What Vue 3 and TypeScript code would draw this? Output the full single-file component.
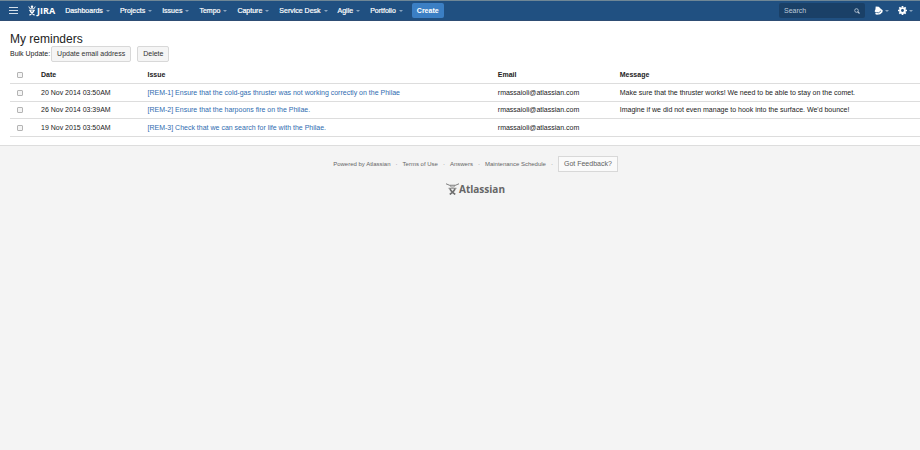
<script setup lang="ts">
import { computed, ref } from 'vue'

interface Reminder {
  id: number
  date: string
  issue: string
  email: string
  message: string
}

const menus: string[] = ['Dashboards', 'Projects', 'Issues', 'Tempo', 'Capture', 'Service Desk', 'Agile', 'Portfolio']
const footerLinks: string[] = ['Powered by Atlassian', 'Terms of Use', 'Answers', 'Maintenance Schedule']

const reminders = ref<Reminder[]>([
  {
    id: 1,
    date: '20 Nov 2014 03:50AM',
    issue: '[REM-1] Ensure that the cold-gas thruster was not working correctly on the Philae',
    email: 'rmassaioli@atlassian.com',
    message: 'Make sure that the thruster works! We need to be able to stay on the comet.',
  },
  {
    id: 2,
    date: '26 Nov 2014 03:39AM',
    issue: '[REM-2] Ensure that the harpoons fire on the Philae.',
    email: 'rmassaioli@atlassian.com',
    message: "Imagine if we did not even manage to hook into the surface. We'd bounce!",
  },
  {
    id: 3,
    date: '19 Nov 2015 03:50AM',
    issue: '[REM-3] Check that we can search for life with the Philae.',
    email: 'rmassaioli@atlassian.com',
    message: '',
  },
])

const selected = ref<number[]>([])
const query = ref('')

const allSelected = computed<boolean>({
  get: () => reminders.value.length > 0 && selected.value.length === reminders.value.length,
  set: (on) => {
    selected.value = on ? reminders.value.map((r) => r.id) : []
  },
})

function removeSelected(): void {
  reminders.value = reminders.value.filter((r) => !selected.value.includes(r.id))
  selected.value = []
}
</script>

<template>
  <div class="page">
    <header class="topbar">
      <button class="icon-button" type="button" aria-label="Applications">
        <svg class="burger" viewBox="0 0 9 7" aria-hidden="true">
          <path d="M0 .5h9M0 3.5h9M0 6.5h9" stroke="#d3dfea" stroke-width="1" />
        </svg>
      </button>
      <a class="brand" href="#" aria-label="JIRA home">
        <svg class="brand-mark" viewBox="0 0 16 22" fill="none" stroke="#fff" aria-hidden="true">
          <circle cx="8" cy="3.500" r="2.500" fill="#fff" stroke="none" />
          <path d="M1.500 3L4 7.500H12L14.500 3" stroke-width="1.800" />
          <path d="M2 10.500H14" stroke-width="1.600" />
          <path d="M12 10.500C11 14.500 8 17.500 3 20.500M4 10.500C5 14.500 8 17.500 13 20.500" stroke-width="2.800" />
        </svg>
        <span>JIRA</span>
      </a>
      <nav class="menus">
        <button v-for="menu in menus" :key="menu" class="menu" type="button">
          {{ menu }}<i class="caret"></i>
        </button>
      </nav>
      <button class="create" type="button">Create</button>
      <form class="search" role="search" @submit.prevent>
        <input v-model="query" type="text" placeholder="Search" aria-label="Search" />
        <svg viewBox="0 0 12 12" fill="none" stroke="#c3d0de" aria-hidden="true">
          <circle cx="5" cy="5" r="3.600" stroke-width="1.600" />
          <path d="M7.500 7.500L11 11" stroke-width="2.200" />
        </svg>
      </form>
      <button class="tool" type="button" aria-label="Help and feedback">
        <svg class="tool-icon" viewBox="0 0 16 16" aria-hidden="true">
          <path d="M3 1L8.500 1.500L12 5L15.500 7.500L15 11L11 14.500L5 15.500L2 14L3.500 11.500L1 9.500L2.500 6Z" fill="#fff" />
          <path d="M4 11.500L8.500 12L12.500 8.500" fill="none" stroke="#205081" stroke-width="1.300" />
        </svg>
        <i class="caret"></i>
      </button>
      <button class="tool" type="button" aria-label="Administration">
        <svg class="tool-icon" viewBox="0 0 16 16" fill="none" stroke="#fff" aria-hidden="true">
          <circle cx="8" cy="8" r="4.300" stroke-width="3.400" />
          <path d="M8 0v3M8 13v3M0 8h3M13 8h3M2.300 2.300l2 2M11.700 11.700l2 2M2.300 13.700l2-2M11.700 4.300l2-2" stroke-width="3" />
        </svg>
        <i class="caret"></i>
      </button>
    </header>

    <main class="content">
      <h1>My reminders</h1>
      <div class="bulk">
        <span>Bulk Update:</span>
        <button class="button" type="button">Update email address</button>
        <button class="button delete" type="button" @click="removeSelected">Delete</button>
      </div>
      <table class="reminders">
        <thead>
          <tr>
            <th class="col-check"><input v-model="allSelected" type="checkbox" aria-label="Select all reminders" /></th>
            <th class="col-date">Date</th>
            <th class="col-issue">Issue</th>
            <th class="col-email">Email</th>
            <th>Message</th>
          </tr>
        </thead>
        <tbody>
          <tr v-for="item in reminders" :key="item.id">
            <td class="col-check">
              <input v-model="selected" type="checkbox" :value="item.id" :aria-label="item.issue" />
            </td>
            <td>{{ item.date }}</td>
            <td><a href="#">{{ item.issue }}</a></td>
            <td>{{ item.email }}</td>
            <td>{{ item.message }}</td>
          </tr>
        </tbody>
      </table>
    </main>

    <footer class="footer">
      <div class="footer-row">
        <template v-for="link in footerLinks" :key="link">
          <a href="#">{{ link }}</a><span class="dot">·</span>
        </template>
        <button class="button feedback" type="button">Got Feedback?</button>
      </div>
      <a class="company" href="#" aria-label="Atlassian">
        <svg viewBox="0 0 26 24" fill="none" stroke="#707070" aria-hidden="true">
          <path d="M0 1.500L7 4.500H19L26 1.500" stroke-width="1.800" />
          <path d="M8 5C9 9 17 9 18 5" stroke-width="1.600" />
          <path d="M5 10.500H21" stroke-width="1.600" />
          <path d="M18 11C17 16 13 19 7.500 23M8 11C9 16 13 19 18.500 23" stroke-width="3.200" />
        </svg>
        <span>Atlassian</span>
      </a>
    </footer>
  </div>
</template>

<style>
body {
  margin: 0;
  background: #f4f4f4;
}
</style>

<style scoped>
.page {
  color: #222;
  font: 7px/10px "Liberation Sans", Arial, sans-serif;
}

button,
input {
  box-sizing: border-box;
  margin: 0;
  font: inherit;
}

a {
  color: #2f6cb0;
  text-decoration: none;
}

svg {
  display: block;
}

.topbar {
  box-sizing: border-box;
  display: flex;
  align-items: center;
  height: 21px;
  padding: 0 7px 0 9px;
  border-top: 1px solid #6f8796;
  border-bottom: 1px solid #2e4d74;
  background: #205081;
  color: #fff;
}

.icon-button,
.menu,
.tool {
  display: flex;
  align-items: center;
  padding: 0;
  border: 0;
  background: none;
  color: #fff;
}

.burger {
  width: 9px;
  height: 7px;
}

.brand {
  display: flex;
  align-items: center;
  gap: 1px;
  margin-left: 10px;
  color: #fff;
  font: bold 9px/12px "Open Sans", sans-serif;
}

.brand-mark {
  width: 8px;
  height: 11px;
}

.menus {
  display: flex;
  gap: 10px;
  margin-left: 10px;
}

.menu {
  gap: 3px;
  -webkit-text-stroke: 0.2px #fff;
}

.caret {
  width: 0;
  border: 2px solid transparent;
  border-top-color: #8ba5c0;
  border-bottom-width: 0;
}

.create {
  height: 15px;
  margin-left: 9px;
  padding: 0 5px;
  border: 0;
  border-radius: 2px;
  background: #3b7fc4;
  color: #fff;
  font-weight: bold;
}

.search {
  display: flex;
  align-items: center;
  box-sizing: border-box;
  width: 86px;
  height: 15px;
  margin: 0 9px 0 auto;
  padding: 0 5px;
  border-radius: 2px;
  background: #1a4067;
}

.search input {
  flex: 1;
  min-width: 0;
  padding: 0;
  border: 0;
  outline: 0;
  background: none;
  color: #fff;
}

.search input::placeholder {
  color: #bccada;
  opacity: 1;
}

.search svg {
  width: 6px;
  height: 6px;
}

.tool {
  gap: 2px;
}

.tool + .tool {
  margin-left: 9px;
}

.tool-icon {
  width: 9px;
  height: 9px;
}

.content {
  padding: 11px 0 8px 10px;
  border-bottom: 1px solid #ddd;
  background: #fff;
}

h1 {
  margin: 0;
  font-size: 12px;
  line-height: 14px;
  font-weight: normal;
}

.bulk {
  display: flex;
  align-items: center;
  gap: 1px;
}

.button {
  height: 16px;
  padding: 0 5px;
  border: 1px solid #d8d8d8;
  border-radius: 2px;
  background: #f5f5f5;
  color: #333;
}

.delete {
  margin-left: 5px;
}

.reminders {
  width: 100%;
  margin-top: 4px;
  border-collapse: collapse;
  table-layout: fixed;
}

th,
td {
  box-sizing: border-box;
  padding: 4px 0 3px;
  border-bottom: 1px solid #ddd;
  text-align: left;
  white-space: nowrap;
}

td {
  padding-top: 3px;
}

.col-check {
  width: 31px;
  padding-left: 7px;
}

.col-date {
  width: 11.7%;
}

.col-issue {
  width: 38.5%;
}

.col-email {
  width: 13.4%;
}

tbody tr:nth-child(odd) td {
  padding-top: 4px;
}

.reminders input {
  display: block;
  appearance: none;
  width: 6px;
  height: 6px;
  border: 1px solid #b4b4b4;
  border-radius: 1px;
  background: #f5f5f5;
}

.reminders input:checked {
  background: #3b73af;
}

.footer {
  display: flex;
  flex-direction: column;
  align-items: center;
  gap: 10px;
  padding: 10px 0 10px 31px;
  color: #707070;
}

.footer-row {
  display: flex;
  align-items: center;
  font-size: 6px;
}

.footer a {
  color: #666;
}

.dot {
  width: 12px;
  text-align: center;
}

.feedback {
  border-radius: 0;
  background: #fafafa;
  color: #606060;
  font-size: 7px;
}

.company {
  display: flex;
  align-items: center;
  font: bold 10px/14px "Open Sans", sans-serif;
}

.company svg {
  width: 13px;
  height: 12px;
}
</style>
